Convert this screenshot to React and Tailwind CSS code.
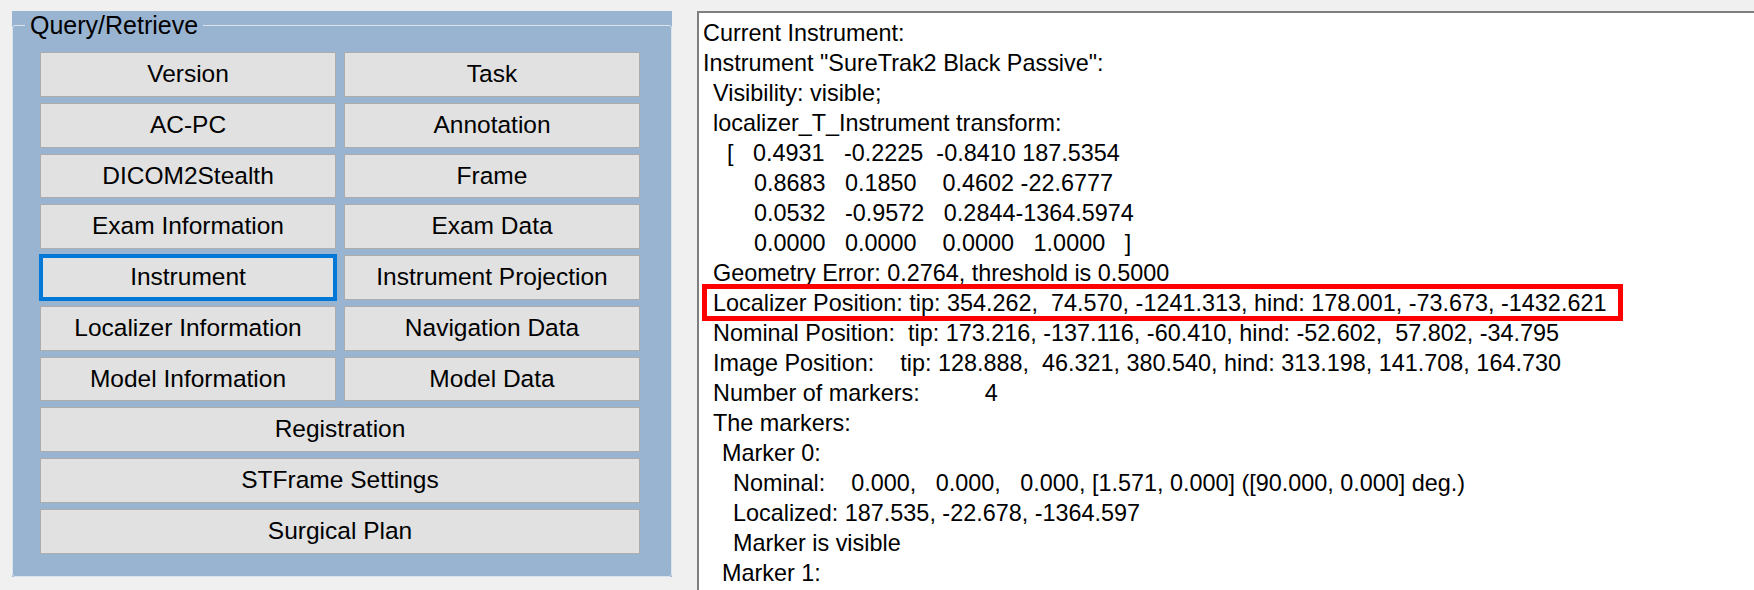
const pairs = [
  ["Version", "Task"],
  ["AC-PC", "Annotation"],
  ["DICOM2Stealth", "Frame"],
  ["Exam Information", "Exam Data"],
  ["Instrument", "Instrument Projection"],
  ["Localizer Information", "Navigation Data"],
  ["Model Information", "Model Data"],
];
const wide = ["Registration", "STFrame Settings", "Surgical Plan"];

function Btn({ label, focused, span }) {
  const base = "h-[44.75px] flex items-center justify-center bg-[#e1e1e1] text-[24.5px] text-black leading-none";
  const edge = focused
    ? " border-[3px] border-[#0078d7] shadow-[0_0_0_1px_#0078d7]"
    : " border border-[#adadad]";
  return (
    <button type="button" className={base + edge + (span ? " col-span-2" : "")}>
      {label}
    </button>
  );
}

function Line({ indent = "", children, mark }) {
  return (
    <div className={"relative h-[30px] leading-[30px] whitespace-pre " + indent}>
      {children}
      {mark && <div className="absolute left-[-1px] top-[-4px] w-[921px] h-[37px] border-[5px] border-[#ff0000]" />}
    </div>
  );
}

export default function App() {
  return (
    <div className="w-[1754px] h-[590px] overflow-hidden bg-[#f0f0f0] flex items-start pt-[11px] pl-[12px] gap-[25px] font-['Liberation_Sans',Arial,sans-serif]">
      <div className="w-[660px] h-[566px] shrink-0 bg-[#99b4d1]">
        <fieldset className="h-full border border-[#dbe3ed] rounded-[3px]">
          <legend className="ml-[12px] px-[5px] text-[25px] leading-[28px] text-black">Query/Retrieve</legend>
          <div className="mt-[13px] pl-[27px]">
            <div className="w-[600px] grid grid-cols-2 gap-x-[8px] gap-y-[6px]">
              {pairs.map(([a, b]) => [
                <Btn key={a} label={a} focused={a === "Instrument"} />,
                <Btn key={b} label={b} />,
              ])}
              {wide.map((w) => (
                <Btn key={w} label={w} span />
              ))}
            </div>
          </div>
        </fieldset>
      </div>

      <div className="flex-1 h-[579px] bg-white border-t-2 border-l-2 border-[#7f7f7f] overflow-hidden pt-[5px] pl-[4px] text-[23.4px] text-black">
        <Line>Current Instrument:</Line>
        <Line>Instrument "SureTrak2 Black Passive":</Line>
        <Line indent="pl-[10px]">Visibility: visible;</Line>
        <Line indent="pl-[10px]">localizer_T_Instrument transform:</Line>
        <Line indent="pl-[24px]">{"[   0.4931   -0.2225  -0.8410 187.5354"}</Line>
        <Line indent="pl-[51px]">{"0.8683   0.1850    0.4602 -22.6777"}</Line>
        <Line indent="pl-[51px]">{"0.0532   -0.9572   0.2844-1364.5974"}</Line>
        <Line indent="pl-[51px]">{"0.0000   0.0000    0.0000   1.0000   ]"}</Line>
        <Line indent="pl-[10px]">Geometry Error: 0.2764, threshold is 0.5000</Line>
        <Line indent="pl-[10px]" mark>
          {"Localizer Position: tip: 354.262,  74.570, -1241.313, hind: 178.001, -73.673, -1432.621"}
        </Line>
        <Line indent="pl-[10px]">
          {"Nominal Position:  tip: 173.216, -137.116, -60.410, hind: -52.602,  57.802, -34.795"}
        </Line>
        <Line indent="pl-[10px]">
          {"Image Position:    tip: 128.888,  46.321, 380.540, hind: 313.198, 141.708, 164.730"}
        </Line>
        <Line indent="pl-[10px]">{"Number of markers:          4"}</Line>
        <Line indent="pl-[10px]">The markers:</Line>
        <Line indent="pl-[19px]">Marker 0:</Line>
        <Line indent="pl-[30px]">
          {"Nominal:    0.000,   0.000,   0.000, [1.571, 0.000] ([90.000, 0.000] deg.)"}
        </Line>
        <Line indent="pl-[30px]">Localized: 187.535, -22.678, -1364.597</Line>
        <Line indent="pl-[30px]">Marker is visible</Line>
        <Line indent="pl-[19px]">Marker 1:</Line>
      </div>
    </div>
  );
}
